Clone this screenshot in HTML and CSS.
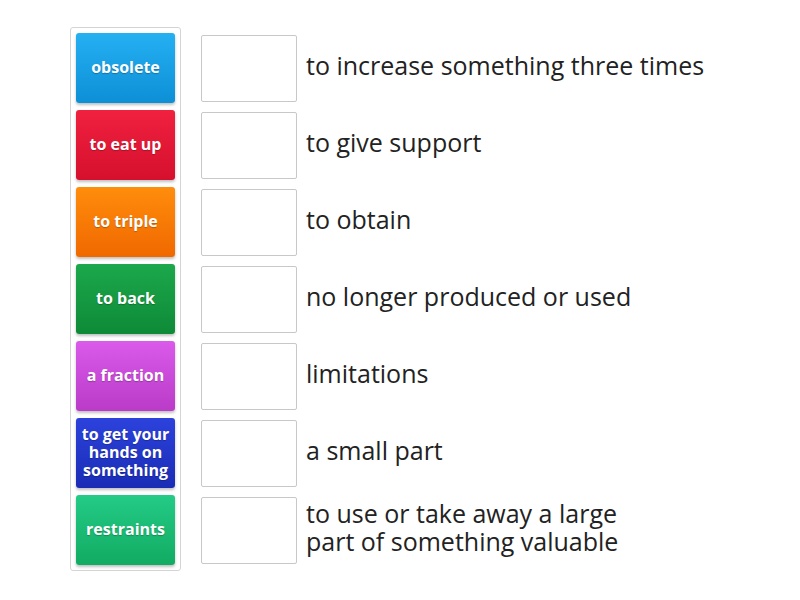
FILE: index.html
```html
<!DOCTYPE html>
<html lang="en">
  <head>
    <meta charset="UTF-8" />
    <meta name="viewport" content="width=device-width, initial-scale=1.0" />
    <title>Match up</title>
    <link rel="stylesheet" href="styles.css">
  </head>
  <body>
    <div id="board">
      <div id="tiles">
        <div class="tile blue">obsolete</div>
        <div class="tile red">to eat up</div>
        <div class="tile orange">to triple</div>
        <div class="tile green">to back</div>
        <div class="tile pink">a fraction</div>
        <div class="tile navy">to get your hands on something</div>
        <div class="tile mint">restraints</div>
      </div>
      <div id="answers">
        <div class="row"><div class="slot"></div><div class="clue">to increase something three times</div></div>
        <div class="row"><div class="slot"></div><div class="clue">to give support</div></div>
        <div class="row"><div class="slot"></div><div class="clue">to obtain</div></div>
        <div class="row"><div class="slot"></div><div class="clue">no longer produced or used</div></div>
        <div class="row"><div class="slot"></div><div class="clue">limitations</div></div>
        <div class="row"><div class="slot"></div><div class="clue">a small part</div></div>
        <div class="row"><div class="slot"></div><div class="clue">to use or take away a large<br>part of something valuable</div></div>
      </div>
    </div>
  </body>
</html>
```

FILE: styles.css
```css
* {
  box-sizing: border-box;
}
body {
  margin: 0;
  background: white;
  font-family: "Open Sans", "Liberation Sans", sans-serif;
}

#board {
  display: flex;
  align-items: flex-start;
  padding: 27px 0 0 70px;
}

#tiles {
  display: flex;
  flex-direction: column;
  gap: 7px;
  padding: 5px;
  border: 1px solid #d4d4d4;
  border-radius: 3px;
}

.tile {
  width: 99px;
  height: 70px;
  display: flex;
  align-items: center;
  justify-content: center;
  text-align: center;
  padding: 0 3px 3px;
  border-radius: 3px;
  color: white;
  font-weight: 700;
  font-size: 16px;
  line-height: 18px;
  text-shadow: 0 1px 1px rgba(0, 0, 0, 0.25);
  box-shadow: 0 2px 3px rgba(0, 0, 0, 0.25);
}
.blue { background: linear-gradient(#25b0f2, #0d8fd6); }
.red { background: linear-gradient(#f0213f, #d5102d); }
.orange { background: linear-gradient(#ff8d0c, #f06800); }
.green { background: linear-gradient(#1ca84c, #0e8a37); }
.pink { background: linear-gradient(#da5ae9, #b93bc8); }
.navy { background: linear-gradient(#2c42dc, #1a2cb5); }
.mint { background: linear-gradient(#23cb86, #12ab62); }

#answers {
  margin: 8px 0 0 20px;
  display: flex;
  flex-direction: column;
  gap: 10px;
}

.row {
  display: flex;
  align-items: center;
  height: 67px;
}

.slot {
  width: 96px;
  height: 67px;
  border: 1px solid #c8c8c8;
  border-radius: 2px;
  flex-shrink: 0;
}

.clue {
  margin: 0 0 7px 9px;
  font-size: 25px;
  line-height: 28px;
  color: #222;
}
```
